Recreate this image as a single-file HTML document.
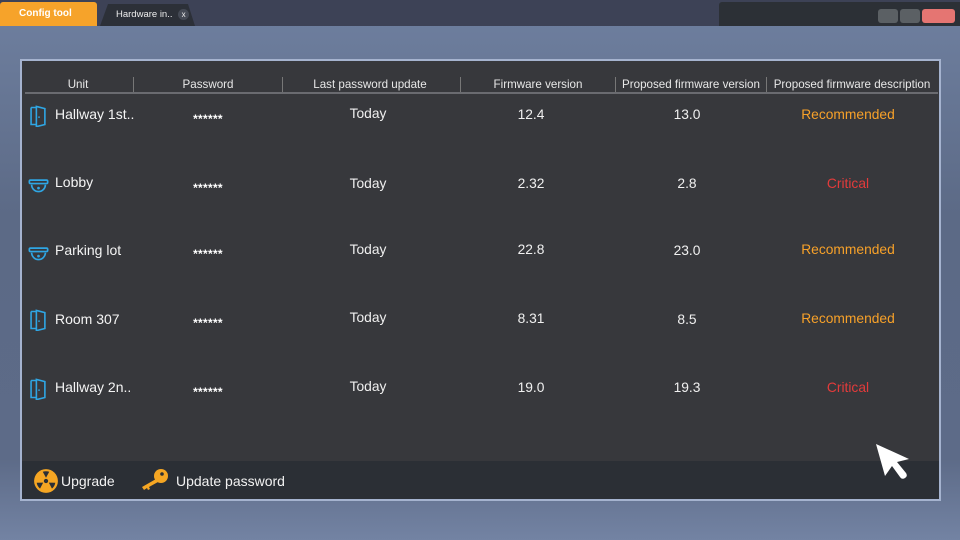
<!DOCTYPE html><html><head><style>
*{margin:0;padding:0;box-sizing:border-box}
body{width:960px;height:540px;overflow:hidden;position:relative;font-family:"Liberation Sans",sans-serif;background:linear-gradient(#6f80a0 0%,#5c6a86 40%,#5d6b88 85%,#7383a3 100%)}
.top{position:absolute;left:0;top:0;width:960px;height:26px;background:#3d4256}
.tab1{position:absolute;left:0;top:2px;width:97px;height:24px;background:#f6a32a;border-radius:3px 3px 0 0;color:#fff;font-weight:bold;font-size:10px;line-height:24px;padding-left:19px}
.tab2{position:absolute;left:100px;top:4px;width:95px;height:22px;background:#2c3038;clip-path:polygon(8px 0,88px 0,95px 100%,0 100%);color:#eee;font-size:9.5px;line-height:22px;padding-left:16px}
.tab2 span{display:inline-block;width:11px;height:11px;border-radius:50%;background:#454a55;font-size:8px;line-height:11px;text-align:center;margin-left:3px}
.win{position:absolute;left:719px;top:2px;width:241px;height:24px;background:#2c3036;border-radius:3px 0 0 0}
.b{position:absolute;top:7px;height:14px;border-radius:3px}
.panel{position:absolute;left:20px;top:59px;width:921px;height:442px;background:#37383c;border:2px solid #a5b3cf}
.h{position:absolute;top:17px;font-size:11.6px;color:#e8e8e8;transform:translateX(-50%);white-space:nowrap}
.sep{position:absolute;top:16px;width:1px;height:15px;background:#777}
.hl{position:absolute;left:3px;top:31px;width:913px;height:2px;background:#6a6b70}
.c{position:absolute;font-size:13.8px;color:#f0f0f0;transform:translateX(-50%);white-space:nowrap}
.n{position:absolute;left:33px;font-size:14px;color:#f4f4f4}
.s{position:absolute;font-size:12px;color:#fff;transform:translateX(-50%);letter-spacing:0.3px;font-weight:bold}
.foot{position:absolute;left:0;top:400px;width:917px;height:38px;background:#2b2f35}
.ft{position:absolute;top:12px;font-size:14px;color:#f2f2f2}
</style></head><body>
<div class="top"></div>
<div class="tab1">Config tool</div>
<div class="tab2">Hardware in.. <span>x</span></div>
<div class="win">
<div class="b" style="left:159px;width:20px;background:#5b6064"></div>
<div class="b" style="left:181px;width:20px;background:#5b6064"></div>
<div class="b" style="left:203px;width:33px;background:#e57572"></div>
</div>
<div class="panel">
<div class="h" style="left:56px">Unit</div>
<div class="h" style="left:186px">Password</div>
<div class="h" style="left:348px">Last password update</div>
<div class="h" style="left:516px">Firmware version</div>
<div class="h" style="left:669px">Proposed firmware version</div>
<div class="h" style="left:830px">Proposed firmware description</div>
<div class="sep" style="left:111px"></div><div class="sep" style="left:260px"></div><div class="sep" style="left:438px"></div><div class="sep" style="left:593px"></div><div class="sep" style="left:744px"></div>
<div class="hl"></div>

<svg style="position:absolute;left:8px;top:44px" width="17" height="22" viewBox="0 0 16 20"><path d="M1 2h5M1 2v16h5M6 1l8 2v15l-8 2z" fill="none" stroke="#2fa6e4" stroke-width="1.5"/><circle cx="8.5" cy="11" r=".8" fill="#2fa6e4"/></svg>
<div class="n" style="top:45px">Hallway 1st..</div>
<div class="s" style="left:186px;top:51px">******</div>
<div class="c" style="left:346px;top:45px">Today</div>
<div class="c" style="left:509px;top:46px">12.4</div>
<div class="c" style="left:665px;top:46px">13.0</div>
<div class="c" style="left:826px;top:46px;color:#f7a129">Recommended</div>

<svg style="position:absolute;left:6px;top:118px" width="21" height="16" viewBox="0 0 18 14"><rect x="1" y="1" width="16" height="3" rx="1" fill="none" stroke="#2fa6e4" stroke-width="1.5"/><path d="M3 5a6 6 0 0 0 12 0" fill="none" stroke="#2fa6e4" stroke-width="1.5"/><circle cx="9" cy="8" r="1.2" fill="#2fa6e4"/></svg>
<div class="n" style="top:113px">Lobby</div>
<div class="s" style="left:186px;top:120px">******</div>
<div class="c" style="left:346px;top:115px">Today</div>
<div class="c" style="left:509px;top:115px">2.32</div>
<div class="c" style="left:665px;top:115px">2.8</div>
<div class="c" style="left:826px;top:115px;color:#e33b3b">Critical</div>

<svg style="position:absolute;left:6px;top:186px" width="21" height="16" viewBox="0 0 18 14"><rect x="1" y="1" width="16" height="3" rx="1" fill="none" stroke="#2fa6e4" stroke-width="1.5"/><path d="M3 5a6 6 0 0 0 12 0" fill="none" stroke="#2fa6e4" stroke-width="1.5"/><circle cx="9" cy="8" r="1.2" fill="#2fa6e4"/></svg>
<div class="n" style="top:181px">Parking lot</div>
<div class="s" style="left:186px;top:186px">******</div>
<div class="c" style="left:346px;top:181px">Today</div>
<div class="c" style="left:509px;top:181px">22.8</div>
<div class="c" style="left:665px;top:182px">23.0</div>
<div class="c" style="left:826px;top:181px;color:#f7a129">Recommended</div>

<svg style="position:absolute;left:8px;top:248px" width="17" height="22" viewBox="0 0 16 20"><path d="M1 2h5M1 2v16h5M6 1l8 2v15l-8 2z" fill="none" stroke="#2fa6e4" stroke-width="1.5"/><circle cx="8.5" cy="11" r=".8" fill="#2fa6e4"/></svg>
<div class="n" style="top:250px">Room 307</div>
<div class="s" style="left:186px;top:255px">******</div>
<div class="c" style="left:346px;top:249px">Today</div>
<div class="c" style="left:509px;top:250px">8.31</div>
<div class="c" style="left:665px;top:251px">8.5</div>
<div class="c" style="left:826px;top:250px;color:#f7a129">Recommended</div>

<svg style="position:absolute;left:8px;top:317px" width="17" height="22" viewBox="0 0 16 20"><path d="M1 2h5M1 2v16h5M6 1l8 2v15l-8 2z" fill="none" stroke="#2fa6e4" stroke-width="1.5"/><circle cx="8.5" cy="11" r=".8" fill="#2fa6e4"/></svg>
<div class="n" style="top:318px">Hallway 2n..</div>
<div class="s" style="left:186px;top:324px">******</div>
<div class="c" style="left:346px;top:318px">Today</div>
<div class="c" style="left:509px;top:319px">19.0</div>
<div class="c" style="left:665px;top:319px">19.3</div>
<div class="c" style="left:826px;top:319px;color:#e33b3b">Critical</div>

<div class="foot">
<svg style="position:absolute;left:11px;top:7px" width="26" height="26" viewBox="0 0 24 24"><circle cx="12" cy="12" r="11" fill="#f5a623"/><circle cx="12" cy="12" r="2" fill="#2b2f35"/><path d="M12 9 L9 3.5 A9 9 0 0 1 15 3.5Z M14.6 13.5 L20.6 13.6 A9 9 0 0 1 17.5 19Z M9.4 13.5 L6.5 19 A9 9 0 0 1 3.4 13.6Z" fill="#2b2f35"/></svg>
<div class="ft" style="left:39px">Upgrade</div>
<svg style="position:absolute;left:117px;top:7px" width="30" height="24" viewBox="0 0 30 24"><circle cx="22" cy="8" r="7" fill="#f5a623"/><circle cx="23" cy="6" r="1.8" fill="#2b2f35"/><path d="M17 11 L3 19 L5 22 L8 20 L9 22 L11 21 L10 19 L19 14Z" fill="#f5a623"/></svg>
<div class="ft" style="left:154px">Update password</div>
</div>
<svg style="position:absolute;left:852px;top:382px" width="40" height="42" viewBox="0 0 40 42"><path d="M2 1 L35 16 L23 19 L32 30 Q34 33 31 35 Q28 37 26 34 L18 23 L11 33Z" fill="#fff"/></svg>
</div>
</body></html>
